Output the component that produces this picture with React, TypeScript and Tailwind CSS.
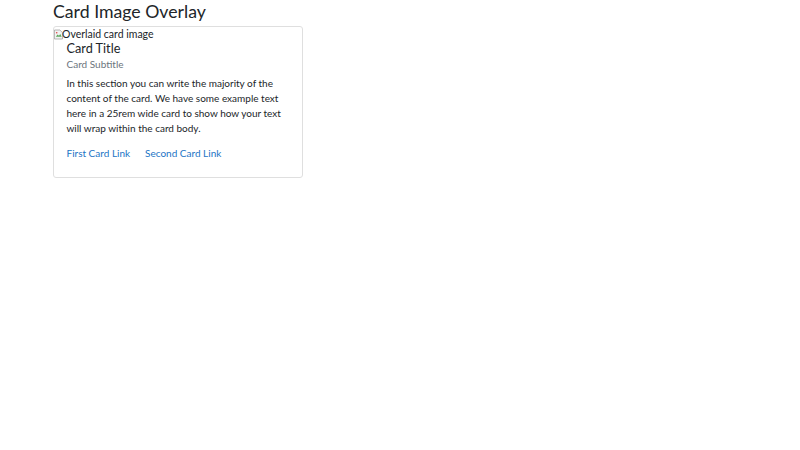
export default function App() {
  return (
    <div className="min-h-[450px] w-[800px] bg-white px-[53px] text-[10px] leading-[15px] text-[#212529]" style={{ fontFamily: 'Lato, "Noto Sans", sans-serif' }}>
      <h2 className="pt-[1px] text-[17.7px] font-normal leading-[22px]">Card Image Overlay</h2>
      <div className="mt-[3px] flex h-[152px] w-[250px] flex-col rounded-[3px] border border-[#dfdfdf]">
        <div className="flex items-center pt-[1px] text-[10.5px] leading-[13px]">
          <svg width="9" height="11" viewBox="0 0 10 11" className="mr-[-1px]">
            <path d="M0.5 0.5h6l3 3v7h-9z" fill="#f2f2f2" stroke="#9a9a9a" strokeWidth="0.8" />
            <path d="M2 8l2-2.5 1.5 1.5 1.5-2 1.5 3z" fill="#5ba85b" />
            <circle cx="3" cy="3.5" r="0.9" fill="#d44" />
          </svg>
          <span>Overlaid card image</span>
        </div>
        <div className="px-[12.5px] pb-[12.5px]">
          <div className="text-[12.7px] leading-[15px]">Card Title</div>
          <div className="mt-[1px] text-[#6c757d]">Card Subtitle</div>
          <p className="mt-[4px]">
            In this section you can write the majority of the content of the card. We have some example text here in a 25rem wide card to show how your text will wrap within the card body.
          </p>
          <div className="mt-[10px] flex gap-[15px] text-[#1b74c5]">
            <a>First Card Link</a>
            <a>Second Card Link</a>
          </div>
        </div>
      </div>
    </div>
  );
}
